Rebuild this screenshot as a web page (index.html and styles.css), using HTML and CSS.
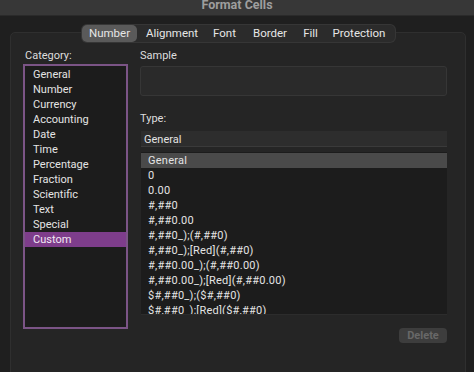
FILE: index.html
```html
<!DOCTYPE html>
<html>
<head>
<meta charset="utf-8">
<link rel="stylesheet" href="styles.css">
</head>
<body>
<div class="window">
  <div class="titlebar"><span class="title">Format Cells</span></div>
  <div class="content">
    <div class="tabs">
      <span class="tab t-number selected">Number</span>
      <span class="tab t-align">Alignment</span>
      <span class="tab t-font">Font</span>
      <span class="tab t-border">Border</span>
      <span class="tab t-fill">Fill</span>
      <span class="tab t-prot">Protection</span>
    </div>
    <div class="group">
      <div class="left">
        <div class="label">Category:</div>
        <ul class="category">
          <li>General</li>
          <li>Number</li>
          <li>Currency</li>
          <li>Accounting</li>
          <li>Date</li>
          <li>Time</li>
          <li>Percentage</li>
          <li>Fraction</li>
          <li>Scientific</li>
          <li>Text</li>
          <li>Special</li>
          <li class="active">Custom</li>
        </ul>
      </div>
      <div class="right">
        <div class="label">Sample</div>
        <div class="sample"></div>
        <div class="label type-label">Type:</div>
        <div class="type-input">General</div>
        <ul class="types">
          <li class="sel">General</li>
          <li>0</li>
          <li>0.00</li>
          <li>#,##0</li>
          <li>#,##0.00</li>
          <li>#,##0_);(#,##0)</li>
          <li>#,##0_);[Red](#,##0)</li>
          <li>#,##0.00_);(#,##0.00)</li>
          <li>#,##0.00_);[Red](#,##0.00)</li>
          <li>$#,##0_);($#,##0)</li>
          <li>$#,##0_);[Red]($#,##0)</li>
        </ul>
        <div class="actions"><span class="btn">Delete</span></div>
      </div>
    </div>
  </div>
</div>
</body>
</html>
```

FILE: styles.css
```css
html, body {
  margin: 0;
  padding: 0;
  background: #1e1e1e;
}
body {
  width: 474px;
  height: 372px;
  overflow: hidden;
  font-family: Roboto, "Liberation Sans", sans-serif;
  font-size: 11px;
  color: #e4e4e4;
}
.window {
  width: 474px;
  height: 372px;
  overflow: hidden;
  background: #1f1f1f;
}
.titlebar {
  height: 15px;
  background: #373737;
  border-bottom: 1px solid #2a2a2a;
  overflow: hidden;
  text-align: center;
}
.title {
  display: block;
  font-weight: 700;
  font-size: 12.5px;
  line-height: 12px;
  margin-top: -1px;
  color: #9e9e9e;
}
.content {
  padding-top: 9px;
}
.tabs {
  display: flex;
  width: 313px;
  height: 17px;
  margin-left: 82px;
  margin-bottom: -10px;
  position: relative;
  z-index: 1;
  background: #2b2b2b;
  border-radius: 5px;
  box-shadow: 0 0 0 1px #363636;
}
.tab {
  line-height: 17px;
  text-align: center;
  color: #e6e6e6;
  border-radius: 5px;
  font-size: 11.5px;
  flex: none;
}
.tab.selected {
  background: #5a5a5a;
}
.t-number { width: 55px; }
.t-align { width: 70px; }
.t-font { width: 35px; }
.t-border { width: 56px; }
.t-fill { width: 25px; }
.t-prot { width: 72px; }
.group {
  margin-left: 10px;
  width: 456px;
  height: 360px;
  box-sizing: border-box;
  background: #252525;
  border: 1px solid #2f2f2f;
  border-radius: 5px;
  display: flex;
  gap: 12px;
  padding: 16px 18px 0 12px;
}
.left {
  width: 105px;
  flex: none;
}
.right {
  width: 307px;
  flex: none;
}
.label {
  line-height: 14px;
  padding-left: 2px;
  color: #dedede;
}
.right .label { padding-left: 0; }
.category {
  list-style: none;
  margin: 1px 0 0;
  padding: 1px 0 0;
  height: 265px;
  box-sizing: border-box;
  border: 2px solid #7b5486;
  background: #1c1c1c;
}
.category li {
  line-height: 15px;
  padding-left: 8px;
}
.category li.active {
  background: #7e3d8b;
  color: #f2e8f4;
}
.sample {
  margin-top: 3px;
  height: 30px;
  box-sizing: border-box;
  background: #2a2a2a;
  border: 1px solid #363636;
  border-radius: 3px;
}
.type-label {
  margin-top: 16px;
}
.type-input {
  margin-top: 5px;
  height: 16px;
  line-height: 17px;
  padding-left: 3px;
  margin-left: 1px;
  background: #2d2d2d;
  border-bottom: 1px solid #3a3a3a;
  box-sizing: border-box;
}
.types {
  list-style: none;
  margin: 5px 0 0 1px;
  padding: 1px 0 0;
  height: 163px;
  overflow: hidden;
  box-sizing: border-box;
  background: #1c1c1c;
  border-bottom: 1px solid #2c2c2c;
}
.types li {
  line-height: 15px;
  padding-left: 7px;
  white-space: nowrap;
  letter-spacing: 0.25px;
}
.types li.sel {
  background: #4a4a4a;
}
.actions {
  display: flex;
  justify-content: flex-end;
  margin-top: 13px;
}
.btn {
  width: 48px;
  height: 15px;
  line-height: 15px;
  text-align: center;
  background: #3d3d3d;
  color: #686868;
  border-radius: 4px;
  font-weight: 700;
}
```
